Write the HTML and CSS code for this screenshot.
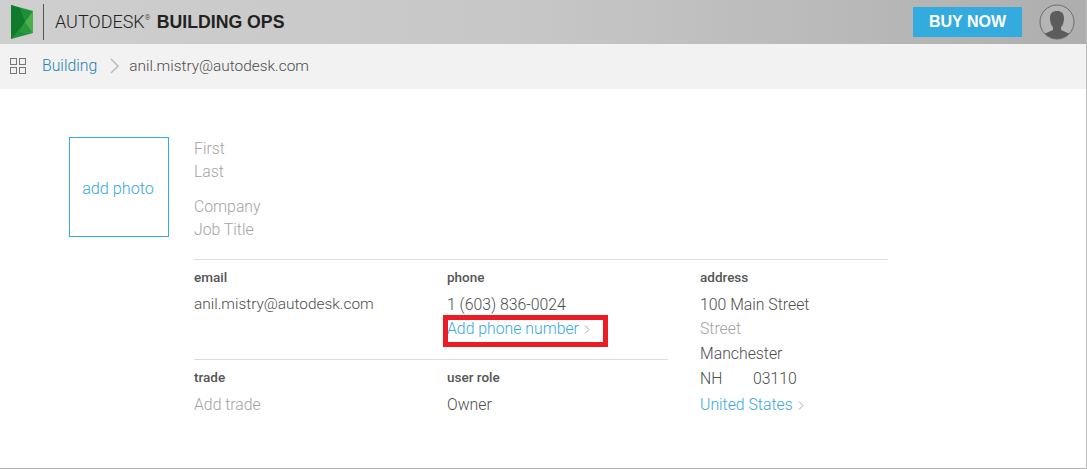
FILE: index.html
```html
<!DOCTYPE html>
<html lang="en">
  <head>
    <meta charset="UTF-8" />
    <title>Autodesk Building Ops</title>
    <link rel="stylesheet" href="styles.css">
  </head>
  <body>
    <header class="topbar">
      <div class="brand">
        <svg class="logo" width="22" height="34" viewBox="0 0 22 34">
          <polygon points="0,0 22,6 22,28 0,34" fill="#1f8f3a" />
          <polygon points="0,0 9,3 14,17 0,34" fill="#0f7a2c" />
          <polygon points="14,17 22,6 22,28 9,27" fill="#4cb04a" />
          <polygon points="9,27 14,17 22,28" fill="#2a9a3c" />
        </svg>
        <span class="brand-sep"></span>
        <span class="brand-name">AUTODESK<sup>®</sup> <b>BUILDING OPS</b></span>
      </div>
      <div class="topbar-right">
        <button class="buy-btn">BUY NOW</button>
        <svg class="avatar" width="36" height="36" viewBox="0 0 36 36">
          <defs>
            <clipPath id="avatarClip"><circle cx="18" cy="18" r="17" /></clipPath>
          </defs>
          <circle cx="18" cy="18" r="17" fill="#b4b4b4" />
          <g clip-path="url(#avatarClip)" fill="#5c5c5c">
            <path d="M18 7c4.500 0 7 2.500 7 7 0 4-1 7-3 9.500v2.500l9 4v6H5v-6l9-4v-2.500c-2-2.500-3-5.500-3-9.500 0-4.500 2.500-7 7-7z" />
          </g>
          <circle cx="18" cy="18" r="17" fill="none" stroke="#6b6b6b" stroke-width="1" />
        </svg>
      </div>
    </header>

    <nav class="crumbs">
      <svg class="grid-icon" width="16" height="16" viewBox="0 0 16 16">
        <rect x="0.500" y="0.500" width="6" height="6" />
        <rect x="9.500" y="0.500" width="6" height="6" />
        <rect x="0.500" y="9.500" width="6" height="6" />
        <rect x="9.500" y="9.500" width="6" height="6" />
      </svg>
      <a class="crumb-link" href="#">Building</a>
      <svg class="crumb-arrow" width="10" height="16" viewBox="0 0 10 16">
        <path d="M1 1l7 7-7 7" />
      </svg>
      <span class="crumb-current">anil.mistry@autodesk.com</span>
    </nav>

    <main class="profile">
      <div class="photo"><a href="#">add photo</a></div>

      <div class="details">
        <div class="names">
          <div class="field muted">First</div>
          <div class="field muted">Last</div>
          <div class="field muted gap-top">Company</div>
          <div class="field muted">Job Title</div>
        </div>

        <div class="info">
          <div class="info-left">
            <div class="info-row first-row">
              <div class="col">
                <div class="label">email</div>
                <div class="line email">anil.mistry@autodesk.com</div>
              </div>
              <div class="col">
                <div class="label">phone</div>
                <div class="line tight">1 (603) 836-0024</div>
                <div class="line">
                  <a class="add-phone" href="#">Add phone number
                    <svg class="chev" width="6" height="9" viewBox="0 0 6 9"><path d="M1 .5l4 4-4 4" /></svg>
                    <span class="highlight"></span></a>
                </div>
              </div>
            </div>
            <div class="info-row">
              <div class="col">
                <div class="label">trade</div>
                <div class="line muted">Add trade</div>
              </div>
              <div class="col">
                <div class="label">user role</div>
                <div class="line">Owner</div>
              </div>
            </div>
          </div>
          <div class="col address">
            <div class="label">address</div>
            <div class="line tight">100 Main Street</div>
            <div class="line muted">Street</div>
            <div class="line">Manchester</div>
            <div class="line"><span class="state">NH</span>03110</div>
            <div class="line country"><a href="#">United States
              <svg class="chev" width="6" height="9" viewBox="0 0 6 9"><path d="M1 .5l4 4-4 4" /></svg></a></div>
          </div>
        </div>
      </div>
    </main>
  </body>
</html>
```

FILE: styles.css
```css
html {
  height: 100%;
}
body {
  margin: 0;
  min-height: 469px;
  box-sizing: border-box;
  overflow: hidden;
  font-family: Roboto, "Liberation Sans", Arial, sans-serif;
  font-size: 15.800px;
  font-weight: 300;
  color: #4d4d4d;
  background-color: #fff;
  border-right: 1px solid #bbb;
  border-bottom: 1px solid #b4b4b4;
}
a {
  color: #36a9e1;
  text-decoration: none;
}
.topbar {
  height: 44px;
  margin-right: -1px;
  display: flex;
  justify-content: space-between;
  align-items: center;
  background: linear-gradient(90deg, #cfcfcf, #c6c6c6 50%, #aeaeae);
}
.brand {
  display: flex;
  align-items: center;
  padding-left: 11px;
}
.brand-sep {
  width: 1px;
  height: 36px;
  margin: 0 11px 0 10px;
  background-color: #555;
}
.brand-name {
  font-size: 18px;
  color: #222;
  white-space: nowrap;
}
.brand-name sup {
  font-size: 7px;
  vertical-align: 8px;
  line-height: 0;
}
.brand-name b {
  font-family: "Liberation Sans", Arial, sans-serif;
  font-size: 17.700px;
  font-weight: bold;
  color: #222;
  margin-left: 2px;
}
.topbar-right {
  display: flex;
  align-items: center;
  gap: 17px;
  padding-right: 12px;
}
.buy-btn {
  width: 109px;
  height: 30px;
  border: none;
  padding: 0;
  background-color: #33abdf;
  color: #fff;
  font-family: "Liberation Sans", Arial, sans-serif;
  font-size: 16px;
  font-weight: bold;
}
.avatar {
  display: block;
}
.crumbs {
  height: 45px;
  margin-right: -1px;
  box-sizing: border-box;
  padding: 0 0 2px 10px;
  display: flex;
  align-items: center;
  background-color: #f2f2f2;
}
.grid-icon rect {
  fill: none;
  stroke: #777;
}
.crumb-link {
  margin-left: 16px;
  color: #1f84b3;
}
.crumb-arrow {
  margin: 0 9px 0 13px;
}
.crumb-arrow path {
  fill: none;
  stroke: #bbb;
  stroke-width: 1.500;
}
.crumb-current {
  font-size: 15.400px;
}
.profile {
  display: flex;
  padding: 48px 0 0 69px;
}
.photo {
  width: 96px;
  height: 95px;
  padding: 3px 2px 0 0;
  flex: none;
  display: flex;
  align-items: center;
  justify-content: center;
  border: 1px solid #33abdf;
  font-size: 16.200px;
}
.details {
  width: 694px;
  margin-left: 25px;
}
.names {
  height: 123px;
  box-sizing: border-box;
  border-bottom: 1px solid #ddd;
}
.field {
  height: 23px;
  line-height: 23px;
}
.gap-top {
  margin-top: 12px;
}
.muted {
  color: #a3a3a3;
}
.info {
  display: flex;
}
.info-left {
  width: 474px;
}
.info-row {
  display: flex;
  height: 100px;
  box-sizing: border-box;
}
.first-row {
  border-bottom: 1px solid #ddd;
}
.col {
  width: 253px;
  flex: none;
}
.address {
  margin-left: 32px;
  width: 188px;
}
.label {
  height: 18px;
  padding-top: 8px;
  line-height: 18px;
  font-size: 13.500px;
  font-weight: 500;
  color: #555;
  margin-bottom: 6px;
}
.line {
  height: 25px;
  line-height: 25px;
}
.tight {
  margin-bottom: -1px;
}
.country {
  margin-top: 1px;
}
.email {
  font-size: 15.400px;
}
.add-phone {
  position: relative;
  display: inline-block;
  vertical-align: top;
}
.highlight {
  position: absolute;
  left: -4px;
  top: -1px;
  width: 155px;
  height: 22px;
  border: 5px solid #ed1c24;
}
.chev {
  margin-left: 1px;
}
.chev path {
  fill: none;
  stroke: #aaa;
}
.state {
  display: inline-block;
  width: 53px;
}
```
